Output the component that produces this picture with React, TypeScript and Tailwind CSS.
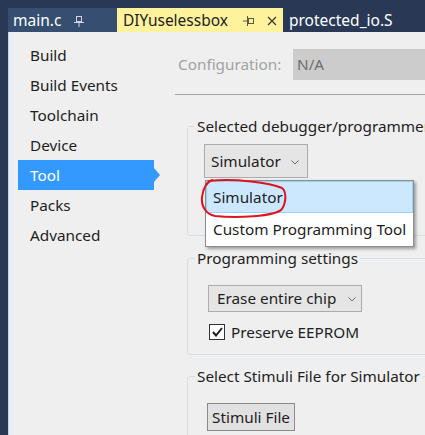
import React from "react";

const FONT = { fontFamily: '"Noto Sans", "Open Sans", sans-serif' };

const NAV = ["Build", "Build Events", "Toolchain", "Device", "Tool", "Packs", "Advanced"];

function PinDown({ color }: { color: string }) {
  return (
    <svg width="10" height="11" viewBox="0 0 10 11" fill="none" stroke={color} strokeWidth="1">
      <rect x="2.5" y="0.5" width="5" height="5" />
      <path d="M0 6.5H10M5 6.5V11" />
    </svg>
  );
}

function PinLeft({ color }: { color: string }) {
  return (
    <svg width="11" height="10" viewBox="0 0 11 10" fill="none" stroke={color} strokeWidth="1">
      <rect x="5.5" y="2.5" width="5" height="5" />
      <path d="M4.5 0V10M4.5 5H0" />
    </svg>
  );
}

function Chevron() {
  return (
    <svg width="8" height="5" viewBox="0 0 8 5" fill="none" stroke="#6b6b6b" strokeWidth="1">
      <path d="M0.5 0.5L4 4L7.5 0.5" />
    </svg>
  );
}

export default function App() {
  return (
    <div className="relative w-[425px] h-[435px] overflow-hidden bg-[#293955] text-[15.3px] text-[#1e1e1e]" style={FONT}>
      {/* tab strip */}
      <div className="h-[8px]" />
      <div className="flex h-[24px] items-stretch pl-[8px] text-[15.5px] leading-none">
        <div className="flex w-[109px] shrink-0 items-center bg-[#364e6f] pl-[5px] pt-[1px] text-white">
          <span>main.c</span>
          <span className="ml-[13px] mt-[1px]">
            <PinDown color="#cfd6e2" />
          </span>
        </div>
        <div className="flex w-[166px] shrink-0 items-center bg-[#fff29d] pl-[6px] pt-[1px] text-[#1e1e1e]">
          <span>DIYuselessbox</span>
          <span className="ml-[15px]">
            <PinLeft color="#5a5a3c" />
          </span>
          <svg className="ml-[13px]" width="10" height="10" viewBox="0 0 10 10" stroke="#3c3c32" strokeWidth="1.3">
            <path d="M1 1L9 9M9 1L1 9" />
          </svg>
        </div>
        <div className="flex items-center whitespace-nowrap pl-[6px] pt-[1px] text-white">protected_io.S</div>
      </div>

      {/* document */}
      <div className="ml-[8px] flex h-[403px] bg-[#efefef]">
        <div className="w-[5px] shrink-0 border-l border-[#c9d3de] bg-[#e8eef5]" />

        {/* left nav */}
        <div className="w-[162px] shrink-0 pt-[8px]">
          {NAV.map((n) => {
            const active = n === "Tool";
            return (
              <div key={n} className="relative ml-[5px] h-[30px]">
                <div
                  className={
                    active
                      ? "flex h-full w-[136px] items-center bg-[#3399ff] pl-[12px] text-white"
                      : "flex h-full items-center pl-[12px] text-[#1e1e1e]"
                  }
                >
                  {n}
                </div>
                {active && (
                  <div className="absolute left-[136px] top-[8px] h-0 w-0 border-y-[7px] border-l-[6px] border-y-transparent border-l-[#3399ff]" />
                )}
              </div>
            );
          })}
        </div>

        {/* right panel */}
        <div className="relative min-w-0 flex-1">
          <div className="mt-[17px] flex h-[31px] items-center">
            <span className="w-[118px] shrink-0 whitespace-nowrap pl-[3px] text-[#a2a2a2]">Configuration:</span>
            <div className="flex h-full flex-1 items-center bg-[#cccccc] pl-[4px] text-[#6d6d6d]">N/A</div>
          </div>
          <div className="mt-[14px] h-px bg-[#a5a5a5]" />

          {/* group 1 */}
          <fieldset className="ml-[12px] mt-[21px] w-[260px] rounded-[3px] border border-[#d5dfe5]">
            <legend className="ml-[7px] whitespace-nowrap px-[2px] leading-[20px]">Selected debugger/programmer</legend>
            <div className="pb-[57px] pl-[16px] pt-[8px]">
              <div className="flex h-[34px] w-[104px] items-center border border-[#acacac] bg-[#e5e5e5] pl-[6px]">
                <span>Simulator</span>
                <span className="ml-[10px] mt-[2px]">
                  <Chevron />
                </span>
              </div>
            </div>
          </fieldset>

          {/* group 2 */}
          <fieldset className="ml-[12px] mt-[12px] w-[260px] rounded-[3px] border border-[#d5dfe5]">
            <legend className="ml-[7px] whitespace-nowrap px-[2px] leading-[20px]">Programming settings</legend>
            <div className="pb-[13px] pl-[20px] pt-[17px]">
              <div className="flex h-[27px] w-[154px] items-center border border-[#acacac] bg-[#e5e5e5] pl-[8px]">
                <span>Erase entire chip</span>
                <span className="ml-[12px] mt-[1px]">
                  <Chevron />
                </span>
              </div>
              <div className="mt-[11px] flex items-center">
                <div className="ml-[1px] flex h-[16px] w-[16px] items-center justify-center border border-[#333333] bg-white">
                  <svg width="11" height="10" viewBox="0 0 11 10" fill="none" stroke="#1e1e1e" strokeWidth="2">
                    <path d="M1 5L4 8.5L10 1" />
                  </svg>
                </div>
                <span className="ml-[6px] leading-[18px]">Preserve EEPROM</span>
              </div>
            </div>
          </fieldset>

          {/* group 3 */}
          <fieldset className="ml-[12px] mt-[11px] w-[260px] rounded-[3px] border border-[#d5dfe5]">
            <legend className="ml-[7px] whitespace-nowrap px-[2px] leading-[20px]">Select Stimuli File for Simulator</legend>
            <div className="pb-[20px] pl-[19px] pt-[17px]">
              <div className="flex h-[28px] w-[88px] items-center justify-center border border-[#8a8a8a] bg-[#e1e1e1]">
                Stimuli File
              </div>
            </div>
          </fieldset>

          {/* open dropdown list */}
          <div className="absolute left-[30px] top-[148px] w-[209px] border border-[#8e8e8e] bg-white shadow-[2px_2px_3px_rgba(0,0,0,0.35)]">
            <div className="flex h-[32px] items-center border border-[#99d1ff] bg-[#cce8ff] pl-[6px]">Simulator</div>
            <div className="flex h-[33px] items-center whitespace-nowrap pl-[7px]">Custom Programming Tool</div>
          </div>

          {/* red hand-drawn mark */}
          <svg className="absolute left-[20px] top-[143px]" width="100" height="50" viewBox="0 0 100 50" fill="none">
            <path
              d="M14 6 C40 3, 75 8, 87 13 C92 17, 91 28, 87 34 C80 42, 40 43, 20 41 C10 39, 6 30, 7 22 C8 14, 10 8, 17 5"
              stroke="#e0141e"
              strokeWidth="2"
              strokeLinecap="round"
            />
          </svg>
        </div>
      </div>
    </div>
  );
}
